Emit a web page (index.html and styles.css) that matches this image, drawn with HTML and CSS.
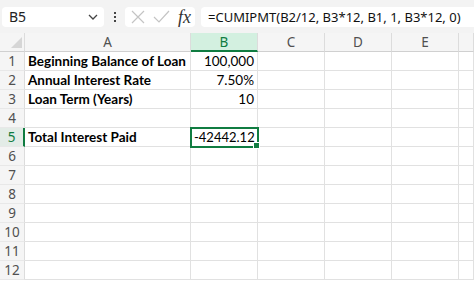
FILE: index.html
```html
<!DOCTYPE html>
<html lang="en">
<head>
  <meta charset="UTF-8" />
  <title>CUMIPMT</title>
  <link rel="stylesheet" href="styles.css">
</head>
<body>
  <div class="toolbar">
    <div class="name-box">
      <span>B5</span>
      <svg class="chevron" width="10" height="6" viewBox="0 0 10 6"><path d="M1 1 L5 5 L9 1" fill="none" stroke="#444" stroke-width="1.3"/></svg>
    </div>
    <div class="dots"><i></i><i></i><i></i></div>
    <div class="fx-box">
      <svg width="14" height="14" viewBox="0 0 14 14"><path d="M1 1 L13 13 M13 1 L1 13" stroke="#c4c4c4" stroke-width="1.2"/></svg>
      <svg width="17" height="14" viewBox="0 0 17 14"><path d="M1 7 L6 12 L16 1" fill="none" stroke="#c4c4c4" stroke-width="1.2"/></svg>
      <span class="fx">fx</span>
    </div>
    <div class="formula">=CUMIPMT(B2/12, B3*12, B1, 1, B3*12, 0)</div>
  </div>

  <div class="sheet">
    <div class="corner"><span></span></div>
    <div class="col-head">A</div>
    <div class="col-head active">B</div>
    <div class="col-head">C</div>
    <div class="col-head">D</div>
    <div class="col-head">E</div>
    <div class="col-head"></div>

    <div class="row-head">1</div>
    <div class="cell label">Beginning Balance of Loan</div>
    <div class="cell num">100,000</div>
    <div class="cell"></div><div class="cell"></div><div class="cell"></div><div class="cell"></div>

    <div class="row-head">2</div>
    <div class="cell label">Annual Interest Rate</div>
    <div class="cell num">7.50%</div>
    <div class="cell"></div><div class="cell"></div><div class="cell"></div><div class="cell"></div>

    <div class="row-head">3</div>
    <div class="cell label">Loan Term (Years)</div>
    <div class="cell num">10</div>
    <div class="cell"></div><div class="cell"></div><div class="cell"></div><div class="cell"></div>

    <div class="row-head">4</div>
    <div class="cell"></div><div class="cell"></div>
    <div class="cell"></div><div class="cell"></div><div class="cell"></div><div class="cell"></div>

    <div class="row-head active">5</div>
    <div class="cell label">Total Interest Paid</div>
    <div class="cell num selected">-42442.12</div>
    <div class="cell"></div><div class="cell"></div><div class="cell"></div><div class="cell"></div>

    <div class="row-head">6</div>
    <div class="cell"></div><div class="cell"></div><div class="cell"></div><div class="cell"></div><div class="cell"></div><div class="cell"></div>
    <div class="row-head">7</div>
    <div class="cell"></div><div class="cell"></div><div class="cell"></div><div class="cell"></div><div class="cell"></div><div class="cell"></div>
    <div class="row-head">8</div>
    <div class="cell"></div><div class="cell"></div><div class="cell"></div><div class="cell"></div><div class="cell"></div><div class="cell"></div>
    <div class="row-head">9</div>
    <div class="cell"></div><div class="cell"></div><div class="cell"></div><div class="cell"></div><div class="cell"></div><div class="cell"></div>
    <div class="row-head">10</div>
    <div class="cell"></div><div class="cell"></div><div class="cell"></div><div class="cell"></div><div class="cell"></div><div class="cell"></div>
    <div class="row-head">11</div>
    <div class="cell"></div><div class="cell"></div><div class="cell"></div><div class="cell"></div><div class="cell"></div><div class="cell"></div>
    <div class="row-head">12</div>
    <div class="cell"></div><div class="cell"></div><div class="cell"></div><div class="cell"></div><div class="cell"></div><div class="cell"></div>
  </div>
</body>
</html>
```

FILE: styles.css
```css
* {
  box-sizing: border-box;
}

body {
  margin: 0;
  width: 474px;
  height: 281px;
  overflow: hidden;
  background: #fff;
  font-family: "Noto Sans", "Open Sans", sans-serif;
  color: #222;
}

/* Formula bar */
.toolbar {
  display: flex;
  align-items: center;
  height: 33px;
  padding: 0 0 0 2px;
  background: #f3f3f3;
}

.name-box {
  display: flex;
  align-items: center;
  justify-content: space-between;
  width: 102px;
  height: 20px;
  padding: 0 6px 0 7px;
  background: #fff;
  border-radius: 4px;
  font-size: 14px;
  color: #222;
}

.dots {
  display: flex;
  flex-direction: column;
  gap: 2px;
  margin: 0 9px 0 10px;
}

.dots i {
  display: block;
  width: 2px;
  height: 2px;
  background: #444;
}

.fx-box {
  display: flex;
  align-items: center;
  gap: 8px;
  width: 70px;
  height: 20px;
  padding: 0 0 0 6px;
  background: #fff;
  border-radius: 4px;
}

.fx {
  font-family: "Liberation Serif", serif;
  font-style: italic;
  font-size: 18px;
  line-height: 18px;
  color: #333;
}

.formula {
  flex: 1;
  height: 20px;
  margin-left: 6px;
  padding-left: 7px;
  background: #fff;
  border-radius: 4px 0 0 4px;
  font-size: 13px;
  line-height: 20px;
  color: #111;
  white-space: nowrap;
  overflow: hidden;
}

/* Grid */
.sheet {
  display: grid;
  grid-template-columns: 25px 166px 67px 67px 67px 67px 1fr;
  grid-template-rows: 19px;
  grid-auto-rows: 19px;
}

.corner {
  background: #f5f5f5;
  border-right: 1px solid #dcdcdc;
  border-bottom: 1px solid #d0d0d0;
  display: flex;
  align-items: flex-end;
  justify-content: flex-end;
  padding: 0 2px 3px 0;
}

.corner span {
  width: 0;
  height: 0;
  border-left: 11px solid transparent;
  border-bottom: 11px solid #d6d6d6;
}

.col-head {
  background: #f5f5f5;
  border-right: 1px solid #dcdcdc;
  border-bottom: 1px solid #d0d0d0;
  font-size: 13.5px;
  line-height: 18px;
  text-align: center;
  color: #505050;
}

.col-head.active {
  background: #d3f0e0;
  color: #107c41;
  border-bottom: 2px solid #107c41;
}

.row-head {
  background: #f5f5f5;
  border-right: 1px solid #dcdcdc;
  border-bottom: 1px solid #e8e8e8;
  font-size: 13.5px;
  line-height: 18px;
  text-align: center;
  color: #505050;
}

.row-head.active {
  background: #e3ece7;
  color: #107c41;
  border-right: 2px solid #107c41;
}

.cell {
  border-right: 1px solid #e1e1e1;
  border-bottom: 1px solid #e1e1e1;
  font-family: "Lato", sans-serif;
  font-size: 13.5px;
  line-height: 18px;
  padding: 0 3px;
  color: #000;
  white-space: nowrap;
}

.cell.label {
  font-weight: 700;
}

.cell.num {
  text-align: right;
}

.cell.selected {
  position: relative;
  padding-right: 6px;
  font-size: 13px;
  outline: 2px solid #107c41;
  outline-offset: -1px;
}

.cell.selected::after {
  content: "";
  position: absolute;
  right: -3px;
  bottom: -3px;
  width: 5px;
  height: 5px;
  background: #107c41;
  border: 1px solid #fff;
}
```
